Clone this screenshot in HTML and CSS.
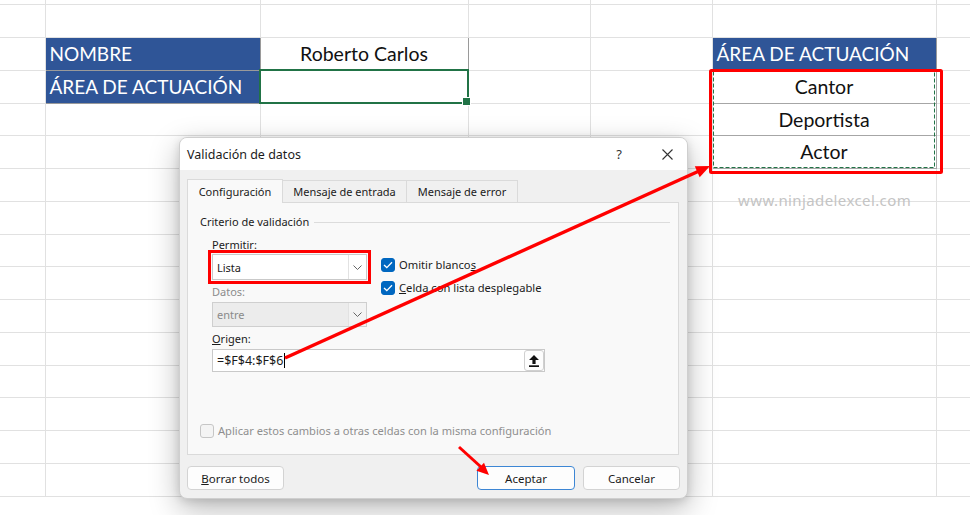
FILE: index.html
```html
<!DOCTYPE html>
<html lang="es">
<head>
    <meta charset="UTF-8">
    <meta name="viewport" content="width=device-width, initial-scale=1.0">
    <title>Validación de datos - Lista</title>
    <link rel="stylesheet" href="styles.css">
</head>
<body>
    <div class="screen">
        <!-- Hoja de cálculo -->
        <table class="sheet">
            <colgroup>
                <col class="col-a"><col class="col-b"><col class="col-c"><col class="col-d">
                <col class="col-e"><col class="col-f"><col class="col-g">
            </colgroup>
            <tr class="row-top"><td></td><td></td><td></td><td></td><td></td><td></td><td></td></tr>
            <tr class="row-33"><td></td><td></td><td></td><td></td><td></td><td></td><td></td></tr>
            <tr class="row-33">
                <td></td>
                <td class="head">NOMBRE</td>
                <td class="value">Roberto Carlos</td>
                <td></td><td></td>
                <td class="head">ÁREA DE ACTUACIÓN</td>
                <td></td>
            </tr>
            <tr class="row-33">
                <td></td>
                <td class="head">ÁREA DE ACTUACIÓN</td>
                <td class="value active"></td>
                <td></td><td></td>
                <td class="item">Cantor</td>
                <td></td>
            </tr>
            <tr class="row-32"><td></td><td></td><td></td><td></td><td></td><td class="item">Deportista</td><td></td></tr>
            <tr class="row-33"><td></td><td></td><td></td><td></td><td></td><td class="item">Actor</td><td></td></tr>
            <tr class="row-33"><td></td><td></td><td></td><td></td><td></td><td></td><td></td></tr>
            <tr class="row-33"><td></td><td></td><td></td><td></td><td></td><td></td><td></td></tr>
            <tr class="row-32"><td></td><td></td><td></td><td></td><td></td><td></td><td></td></tr>
            <tr class="row-33"><td></td><td></td><td></td><td></td><td></td><td></td><td></td></tr>
            <tr class="row-33"><td></td><td></td><td></td><td></td><td></td><td></td><td></td></tr>
            <tr class="row-33"><td></td><td></td><td></td><td></td><td></td><td></td><td></td></tr>
            <tr class="row-32"><td></td><td></td><td></td><td></td><td></td><td></td><td></td></tr>
            <tr class="row-33"><td></td><td></td><td></td><td></td><td></td><td></td><td></td></tr>
            <tr class="row-33"><td></td><td></td><td></td><td></td><td></td><td></td><td></td></tr>
            <tr class="row-33"><td></td><td></td><td></td><td></td><td></td><td></td><td></td></tr>
        </table>

        <div class="watermark">www.ninjadelexcel.com</div>

        <!-- Ventana de validación -->
        <div class="dialog">
            <div class="title-bar">
                <span class="title">Validación de datos</span>
                <span class="title-btn help">?</span>
                <span class="title-btn close">
                    <svg width="11" height="11" viewBox="0 0 11 11"><path d="M0.5 0.5L10.5 10.5M10.5 0.5L0.5 10.5" stroke="#333" stroke-width="1.1" fill="none"/></svg>
                </span>
            </div>

            <div class="dialog-body">
                <div class="tabs">
                    <div class="tab is-active">Configuración</div>
                    <div class="tab tab-input">Mensaje de entrada</div>
                    <div class="tab tab-error">Mensaje de error</div>
                </div>

                <div class="panel">
                    <div class="group-title">Criterio de validación</div>

                    <div class="fields">
                        <div class="allow-row">
                            <div class="allow-col">
                                <div class="label"><u>P</u>ermitir:</div>
                                <div class="select marked">
                                    <span class="select-text">Lista</span>
                                    <span class="select-arrow">
                                        <svg width="9" height="5" viewBox="0 0 9 5"><polyline points="0.5,0.5 4.5,4.5 8.5,0.5" stroke="#666" fill="none"/></svg>
                                    </span>
                                </div>
                                <div class="label disabled">Datos:</div>
                                <div class="select is-disabled">
                                    <span class="select-text">entre</span>
                                    <span class="select-arrow">
                                        <svg width="9" height="5" viewBox="0 0 9 5"><polyline points="0.5,0.5 4.5,4.5 8.5,0.5" stroke="#666" fill="none"/></svg>
                                    </span>
                                </div>
                            </div>

                            <div class="checks">
                                <div class="check">
                                    <span class="box checked">
                                        <svg width="10" height="8" viewBox="0 0 10 8"><polyline points="1,4 3.8,6.6 9,1.2" stroke="#fff" stroke-width="1.3" fill="none"/></svg>
                                    </span>
                                    <span>Omitir blanco<u>s</u></span>
                                </div>
                                <div class="check">
                                    <span class="box checked">
                                        <svg width="10" height="8" viewBox="0 0 10 8"><polyline points="1,4 3.8,6.6 9,1.2" stroke="#fff" stroke-width="1.3" fill="none"/></svg>
                                    </span>
                                    <span><u>C</u>elda con lista desplegable</span>
                                </div>
                            </div>
                        </div>

                        <div class="label"><u>O</u>rigen:</div>
                        <div class="ref-input">
                            <span class="ref-text">=$F$4:$F$6</span><span class="caret"></span>
                            <span class="ref-btn">
                                <svg width="10" height="12" viewBox="0 0 10 12"><path d="M5 0L10 5H6.6V9H3.4V5H0Z" fill="#111"/><rect x="0" y="10.3" width="10" height="1.7" fill="#111"/></svg>
                            </span>
                        </div>
                    </div>

                    <div class="check apply">
                        <span class="box"></span>
                        <span>Aplicar estos cambios a otras celdas con la misma configuración</span>
                    </div>
                </div>

                <div class="footer">
                    <div class="btn"><u>B</u>orrar todos</div>
                    <div class="btn primary">Aceptar</div>
                    <div class="btn">Cancelar</div>
                </div>
            </div>
        </div>

        <!-- Marcas rojas sobre la captura -->
        <svg class="marks" width="970" height="515" viewBox="0 0 970 515">
            <rect x="713.5" y="71.5" width="221" height="96" fill="none" stroke="#217346" stroke-dasharray="4 2"/>
            <rect x="710.5" y="70.5" width="231" height="102" rx="1" fill="none" stroke="#f00" stroke-width="3"/>
            <line x1="285" y1="358" x2="698" y2="171.5" stroke="#f00" stroke-width="3.5"/>
            <polygon points="710,166 699.7,177.2 694.8,166.3" fill="#f00"/>
            <line x1="459" y1="447" x2="481" y2="467" stroke="#f00" stroke-width="3"/>
            <polygon points="489,475 476.4,470.8 484,462.8" fill="#f00"/>
        </svg>
    </div>
</body>
</html>
```

FILE: styles.css
```css
* {
    box-sizing: border-box;
}
body {
    margin: 0;
    background: #fff;
}
.screen {
    position: relative;
    width: 970px;
    height: 515px;
    overflow: hidden;
    background: #fff;
}

/* hoja */
.sheet {
    border-collapse: collapse;
    table-layout: fixed;
    width: 970px;
    font-family: Lato, "Liberation Sans", sans-serif;
    font-size: 19px;
    color: #111;
}
.col-a { width: 45px; }
.col-b { width: 215px; }
.col-c { width: 208px; }
.col-d { width: 122px; }
.col-e { width: 122px; }
.col-f { width: 224px; }
.col-g { width: 34px; }
.sheet td {
    padding: 0 4px;
    border: 1px solid #e1e1e1;
    white-space: nowrap;
    vertical-align: middle;
}
.sheet tr:first-child td { border-top: none; }
.sheet td:first-child { border-left: none; }
.row-top { height: 4px; }
.row-33 { height: 33px; }
.row-32 { height: 32px; }
.sheet .head {
    background: #2f5597;
    color: #fff;
    border-color: #9a9a9a;
}
.sheet .value {
    text-align: center;
    font-size: 19.5px;
    border-color: #9a9a9a;
}
.sheet .active {
    position: relative;
    border: 2px solid #217346;
}
.sheet .active::after {
    content: "";
    position: absolute;
    right: -4px;
    bottom: -4px;
    width: 7px;
    height: 7px;
    background: #217346;
    border: 1px solid #fff;
}
.sheet .item {
    text-align: center;
    font-size: 19.5px;
    border-color: #a6a6a6;
}
.watermark {
    position: absolute;
    left: 738px;
    top: 190px;
    font-family: "Noto Sans", sans-serif;
    font-size: 15px;
    color: #c4c4c4;
    letter-spacing: 0.4px;
}

/* ventana */
.dialog {
    position: absolute;
    left: 179px;
    top: 137px;
    width: 509px;
    height: 362px;
    display: flex;
    flex-direction: column;
    background: #f0f0f0;
    border: 1px solid #cfcfcf;
    border-radius: 8px;
    overflow: hidden;
    box-shadow: 0 10px 30px rgba(0,0,0,0.28), 0 2px 8px rgba(0,0,0,0.12);
    font-family: "Noto Sans", sans-serif;
    font-size: 11px;
    color: #1b1b1b;
}
.title-bar {
    height: 32px;
    display: flex;
    align-items: center;
    padding-left: 7px;
    background: #fff;
}
.title {
    flex: 1;
    font-size: 12.5px;
    margin-top: 1px;
}
.title-btn {
    height: 32px;
    display: flex;
    align-items: center;
    justify-content: center;
}
.help {
    width: 56px;
    font-size: 13px;
    color: #333;
}
.close {
    width: 40px;
}
.dialog-body {
    flex: 1;
    display: flex;
    flex-direction: column;
    padding: 9px 7px 0 7px;
}
.tabs {
    display: flex;
    align-items: flex-end;
    height: 23px;
}
.tab {
    height: 22px;
    display: flex;
    align-items: center;
    justify-content: center;
    border: 1px solid #dadada;
    border-bottom: none;
    margin-left: -1px;
    background: #f0f0f0;
}
.tab.is-active {
    width: 96px;
    height: 24px;
    margin-left: 0;
    margin-bottom: -1px;
    background: #f9f9f9;
    position: relative;
    z-index: 1;
}
.tab-input { width: 125px; }
.tab-error { width: 112px; }
.panel {
    height: 253px;
    margin-right: 1px;
    display: flex;
    flex-direction: column;
    padding: 10px 8px 12px 12px;
    background: #f9f9f9;
    border: 1px solid #dadada;
}
.group-title {
    display: flex;
    align-items: center;
    gap: 5px;
    line-height: 18px;
}
.group-title::after {
    content: "";
    flex: 1;
    border-top: 1px solid #dcdcdc;
}
.fields {
    margin: 5px 0 0 12px;
}
.allow-row {
    display: flex;
}
.allow-col {
    width: 155px;
}
.label {
    line-height: 18px;
}
.label.disabled {
    margin-top: 3px;
    color: #8c8c8c;
}
.select {
    height: 26px;
    display: flex;
    align-items: stretch;
    background: #fff;
    border: 1px solid #c9c9c9;
}
.select.marked {
    outline: 3px solid #f00;
    outline-offset: 1px;
}
.select.is-disabled {
    height: 25px;
    margin-top: 1px;
    background: #ececec;
    border-color: #cfcfcf;
    color: #8a8a8a;
}
.select-text {
    flex: 1;
    display: flex;
    align-items: center;
    padding-left: 4px;
}
.select-arrow {
    width: 18px;
    display: flex;
    align-items: center;
    justify-content: center;
    border-left: 1px solid #e2e2e2;
}
.is-disabled .select-arrow {
    background: #f3f3f3;
}
.checks {
    margin-left: 14px;
    padding-top: 17px;
}
.check {
    height: 23px;
    display: flex;
    align-items: center;
    gap: 4px;
    font-size: 11.2px;
}
.box {
    width: 14px;
    height: 14px;
    display: flex;
    align-items: center;
    justify-content: center;
    border: 1px solid #c6c6c6;
    border-radius: 3px;
    background: #f4f4f4;
}
.box.checked {
    background: #0067c0;
    border-color: #0067c0;
}
.fields > .label {
    margin-top: 3px;
}
.ref-input {
    width: 333px;
    height: 23px;
    display: flex;
    align-items: center;
    margin-top: 1px;
    padding-left: 4px;
    background: #fff;
    border: 1px solid #c9c9c9;
}
.ref-text {
    font-size: 12.5px;
}
.caret {
    width: 1px;
    height: 15px;
    margin-left: 1px;
    background: #000;
}
.ref-btn {
    width: 20px;
    height: 21px;
    margin-left: auto;
    display: flex;
    align-items: center;
    justify-content: center;
    border: 1px solid #d0d0d0;
    border-radius: 3px;
    background: #fdfdfd;
}
.apply {
    margin-top: auto;
    color: #8f8f8f;
    font-size: 11.1px;
}
.footer {
    display: flex;
    gap: 8px;
    margin-top: 11px;
}
.btn {
    width: 97px;
    height: 24px;
    display: flex;
    align-items: center;
    justify-content: center;
    background: #fdfdfd;
    border: 1px solid #d3d3d3;
    border-radius: 4px;
    font-size: 11.5px;
}
.btn.primary {
    width: 98px;
    margin-left: auto;
    border-color: #3d86d4;
}

.marks {
    position: absolute;
    left: 0;
    top: 0;
    pointer-events: none;
}
```
